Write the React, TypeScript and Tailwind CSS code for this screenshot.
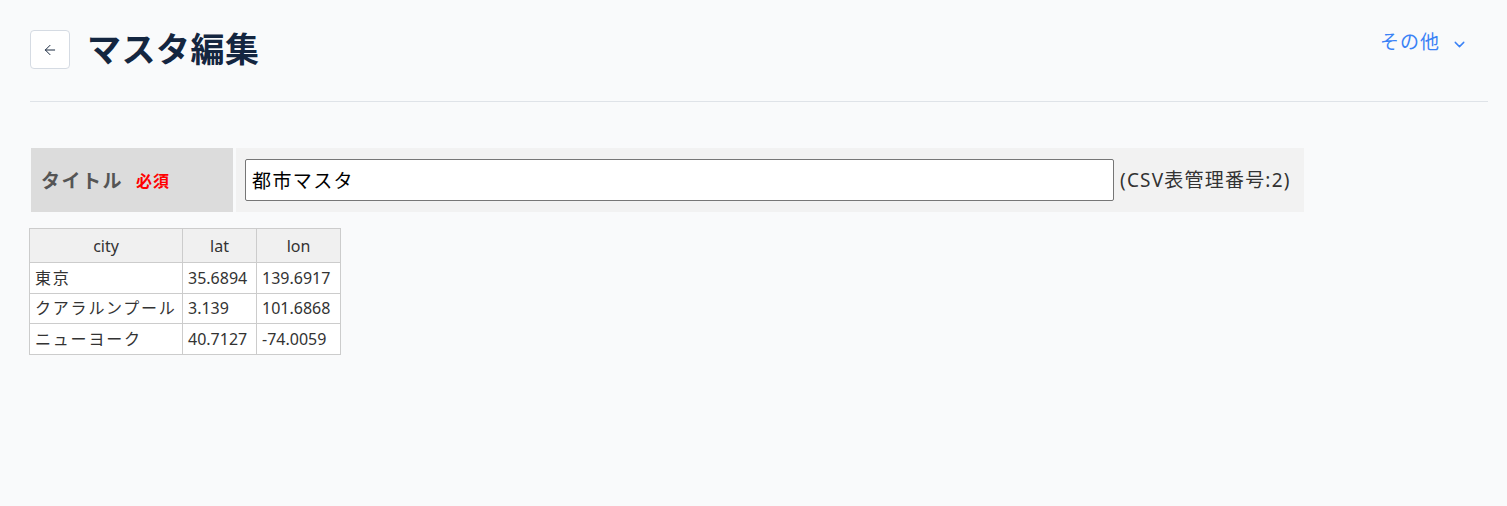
import { ArrowLeft, ChevronDown } from "lucide-react";

const rows = [
  { city: "東京", lat: "35.6894", lon: "139.6917" },
  { city: "クアラルンプール", lat: "3.139", lon: "101.6868" },
  { city: "ニューヨーク", lat: "40.7127", lon: "-74.0059" },
];

export default function App() {
  return (
    <div
      className="min-h-[506px] bg-[#f9fafb] pl-[30px] pr-[19px] pt-[30px] text-[#333]"
      style={{ fontFamily: '"Noto Sans", "Noto Sans CJK JP", sans-serif' }}
    >
      {/* Header */}
      <div className="flex items-start justify-between border-b border-[#dfe3e8] pb-[32px]">
        <div className="flex items-center gap-[17px]">
          <button className="flex h-[39px] w-[40px] items-center justify-center rounded-[4px] border border-[#d5dbe3] bg-white text-[#1b2a41]">
            <ArrowLeft size={16} strokeWidth={1.5} />
          </button>
          <h1 className="text-[34px] font-bold leading-[39px] tracking-[0.5px] text-[#142640]">
            マスタ編集
          </h1>
        </div>
        <button className="mr-[20px] mt-[1px] flex items-center gap-[11px] text-[19px] leading-[22px] tracking-[1px] text-[#3b82f6]">
          その他
          <ChevronDown size={17} strokeWidth={2} className="mt-[4px]" />
        </button>
      </div>

      {/* Title row */}
      <div className="ml-[1px] mt-[46px] flex w-[1273px] gap-[3px]">
        <div className="flex h-[64px] w-[202px] items-center gap-[13px] bg-[#dcdcdc] pl-[10px] pt-[2px]">
          <span className="text-[19px] font-bold tracking-[1.5px] text-[#555]">タイトル</span>
          <span className="text-[16px] font-bold tracking-[1px] text-[#f00]">必須</span>
        </div>
        <div className="flex flex-1 items-center gap-[6px] bg-[#f2f2f2] pl-[9px]">
          <input
            defaultValue="都市マスタ"
            className="h-[42px] w-[869px] rounded-[2px] border border-[#767676] bg-white px-[6px] text-[19px] tracking-[1.4px] text-black outline-none"
          />
          <span className="text-[19px] tracking-[1.2px] text-[#333]">(CSV表管理番号:2)</span>
        </div>
      </div>

      {/* Table */}
      <table className="-ml-[1px] mt-[16px] border-collapse text-[16px] leading-[22px] text-[#333]">
        <thead>
          <tr className="bg-[#f0f0f0]">
            <th className="h-[34px] w-[153px] border border-[#ccc] font-normal">city</th>
            <th className="w-[74px] border border-[#ccc] font-normal">lat</th>
            <th className="w-[84px] border border-[#ccc] font-normal">lon</th>
          </tr>
        </thead>
        <tbody className="bg-white">
          {rows.map((r) => (
            <tr key={r.city}>
              <td className="h-[30.5px] whitespace-nowrap border border-[#ccc] px-[5px] tracking-[1.8px]">
                {r.city}
              </td>
              <td className="border border-[#ccc] px-[5px]">{r.lat}</td>
              <td className="border border-[#ccc] px-[5px]">{r.lon}</td>
            </tr>
          ))}
        </tbody>
      </table>
    </div>
  );
}
